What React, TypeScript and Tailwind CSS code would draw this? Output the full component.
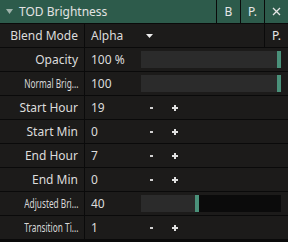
import React from 'react';

const font = { fontFamily: '"Noto Sans", "Open Sans", sans-serif' };

function Label({ text, narrow }: { text: string; narrow?: boolean }) {
  return (
    <div className="w-[84px] shrink-0 bg-[#1c1b1a] flex items-center justify-end pr-[6px] overflow-hidden">
      {narrow ? (
        <span className="inline-block whitespace-nowrap text-[12px] text-[#d8d8d8] origin-right scale-x-[0.69]">{text}</span>
      ) : (
        <span className="whitespace-nowrap text-[12px] text-[#dcdcdc]">{text}</span>
      )}
    </div>
  );
}

function Slider({ value, pct }: { value: string; pct: number }) {
  return (
    <div className="flex-1 bg-[#1c1b1a] flex items-center">
      <span className="w-[56px] pl-[6px] text-[12px] text-[#dcdcdc]">{value}</span>
      <div className="relative h-[17px] w-[140px] bg-[#0b0b0b]">
        <div className="absolute left-0 top-0 h-full bg-[#2b2b2b]" style={{ width: `${pct}%` }} />
        <div
          className="absolute top-0 h-full w-[4px] bg-[#4a917a]"
          style={{ left: `calc(${pct}% - 4px)` }}
        />
      </div>
    </div>
  );
}

function Stepper({ value }: { value: string }) {
  return (
    <div className="flex-1 bg-[#1c1b1a] flex items-center">
      <span className="w-[56px] pl-[6px] text-[12px] text-[#dcdcdc]">{value}</span>
      <span className="ml-[9px] block h-[2px] w-[3px] bg-[#d0d0d0]" />
      <span className="ml-[19px] relative block h-[6px] w-[6px]">
        <span className="absolute left-0 top-[2px] h-[2px] w-[6px] bg-[#e0e0e0]" />
        <span className="absolute left-[2px] top-0 h-[6px] w-[2px] bg-[#e0e0e0]" />
      </span>
    </div>
  );
}

export default function App() {
  const steppers: [string, string][] = [
    ['Start Hour', '19'],
    ['Start Min', '0'],
    ['End Hour', '7'],
    ['End Min', '0'],
  ];

  return (
    <div className="w-[288px] h-[242px] bg-[#0a0a0a] flex flex-col gap-px overflow-hidden" style={font}>
      {/* header */}
      <div className="h-[23px] flex gap-px shrink-0">
        <div className="flex-1 bg-[#2d5b4b] flex items-center">
          <svg width="7" height="5" viewBox="0 0 7 5" className="ml-[6px]">
            <path d="M0 0h7L3.5 5z" fill="#9fb3ab" />
          </svg>
          <span className="ml-[6px] text-[12px] text-[#e2e2e2]">TOD Brightness</span>
        </div>
        <div className="w-[23px] bg-[#2d5b4b] flex items-center justify-center text-[12px] text-[#e6e6e6]">B</div>
        <div className="w-[23px] bg-[#2d5b4b] flex items-center justify-center text-[12px] text-[#e6e6e6]">P.</div>
        <div className="w-[23px] bg-[#2d5b4b] flex items-center justify-center">
          <svg width="9" height="9" viewBox="0 0 9 9">
            <path d="M1 1l7 7M8 1L1 8" stroke="#e6e6e6" strokeWidth="1.3" />
          </svg>
        </div>
      </div>

      {/* blend mode */}
      <div className="h-[23px] flex gap-px shrink-0">
        <Label text="Blend Mode" />
        <div className="flex-1 flex gap-px">
          <div className="flex-1 bg-[#1c1b1a] flex items-center">
            <span className="w-[56px] pl-[6px] text-[12px] text-[#dcdcdc]">Alpha</span>
            <svg width="7" height="4" viewBox="0 0 7 4" className="ml-[5px]">
              <path d="M0 0h7L3.5 4z" fill="#eeeeee" />
            </svg>
          </div>
          <div className="w-[23px] bg-[#1c1b1a] flex items-center justify-center text-[12px] text-[#e6e6e6]">P.</div>
        </div>
      </div>

      <div className="h-[23px] flex gap-px shrink-0">
        <Label text="Opacity" />
        <Slider value="100 %" pct={100} />
      </div>

      <div className="h-[23px] flex gap-px shrink-0">
        <Label text="Normal Brig..." narrow />
        <Slider value="100" pct={100} />
      </div>

      {steppers.map(([l, v]) => (
        <div key={l} className="h-[23px] flex gap-px shrink-0">
          <Label text={l} />
          <Stepper value={v} />
        </div>
      ))}

      <div className="h-[23px] flex gap-px shrink-0">
        <Label text="Adjusted Bri..." narrow />
        <Slider value="40" pct={41.5} />
      </div>

      <div className="h-[23px] flex gap-px shrink-0">
        <Label text="Transition Ti..." narrow />
        <Stepper value="1" />
      </div>
    </div>
  );
}
